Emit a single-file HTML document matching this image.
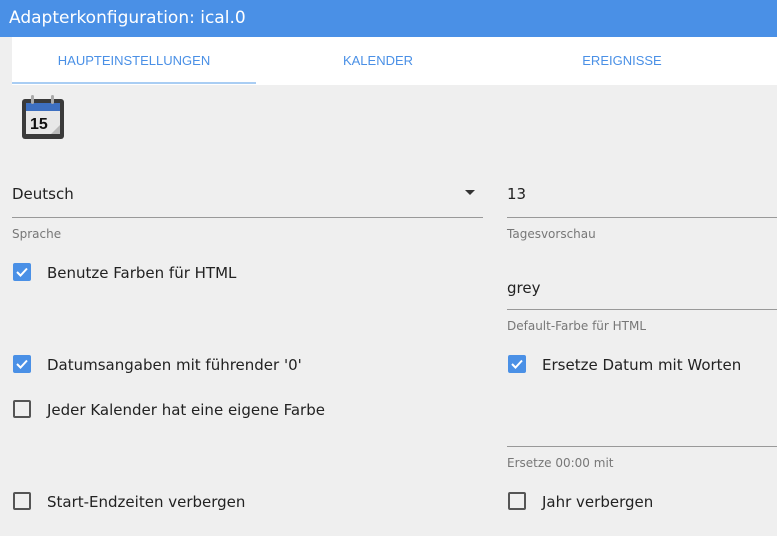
<!DOCTYPE html>
<html><head><style>
body{margin:0;width:777px;height:536px;background:#efefef;font-family:"DejaVu Sans",sans-serif;position:relative;overflow:hidden;color:#222}
.hdr{position:absolute;left:0;top:0;width:777px;height:37px;background:#4a90e6;color:#fff;font-size:17px;line-height:37px;padding-left:9px;box-sizing:border-box}
.tabs{position:absolute;left:12px;top:37px;width:765px;height:48px;background:#fff;font-family:"Liberation Sans",sans-serif}
.tab{position:absolute;top:0;height:48px;line-height:48px;font-size:13px;color:#4a90e6;text-align:center;width:244px}
.ul{position:absolute;left:0;top:45px;width:244px;height:2px;background:#a9cdf3}
.t{position:absolute;font-size:15px;color:#222}
.lbl{position:absolute;font-size:12px;color:#777}
.line{position:absolute;height:1px;background:#999}
.cb{position:absolute;width:18px;height:18px;border-radius:2px;box-sizing:border-box}
.on{background:#4a90e6}
.off{border:2px solid #555}
</style></head><body>
<div class="hdr">Adapterkonfiguration: ical.0</div>
<div class="tabs">
<div class="tab" style="left:0">HAUPTEINSTELLUNGEN</div>
<div class="tab" style="left:244px;width:244px">KALENDER</div>
<div class="tab" style="left:488px;width:244px">EREIGNISSE</div>
<div class="ul"></div>
</div>
<svg style="position:absolute;left:21px;top:94px" width="46" height="46" viewBox="0 0 46 46">
<rect x="1" y="5" width="42" height="40" rx="3" fill="#3a3a3a"/>
<rect x="5" y="9" width="34" height="8" fill="#3d6fc0"/>
<rect x="5" y="17" width="34" height="23" fill="#e8e8e8"/>
<path d="M30 40 L39 31 L39 40Z" fill="#bbb"/>
<text x="9" y="35" font-size="16" font-weight="bold" font-family="Liberation Sans" fill="#111">15</text>
<rect x="10" y="1" width="3" height="9" rx="1.5" fill="#aaa"/><rect x="30" y="1" width="3" height="9" rx="1.5" fill="#aaa"/>
</svg>
<div class="t" style="left:12px;top:185px">Deutsch</div>
<svg style="position:absolute;left:465px;top:190px" width="10" height="6"><path d="M0 0 L10 0 L5 5Z" fill="#333"/></svg>
<div class="line" style="left:12px;top:217px;width:471px"></div>
<div class="lbl" style="left:12px;top:227px">Sprache</div>
<div class="t" style="left:507px;top:185px">13</div>
<div class="line" style="left:507px;top:217px;width:270px"></div>
<div class="lbl" style="left:507px;top:227px">Tagesvorschau</div>
<div class="cb on" style="left:13px;top:263px"><svg width="18" height="18"><path d="M4 9 L7.5 12.5 L14 5.5" stroke="#fff" stroke-width="2" fill="none"/></svg></div>
<div class="t" style="left:47px;top:264px">Benutze Farben für HTML</div>
<div class="t" style="left:507px;top:279px">grey</div>
<div class="line" style="left:507px;top:309px;width:270px"></div>
<div class="lbl" style="left:507px;top:319px">Default-Farbe für HTML</div>
<div class="cb on" style="left:13px;top:355px"><svg width="18" height="18"><path d="M4 9 L7.5 12.5 L14 5.5" stroke="#fff" stroke-width="2" fill="none"/></svg></div>
<div class="t" style="left:47px;top:356px">Datumsangaben mit führender '0'</div>
<div class="cb on" style="left:508px;top:355px"><svg width="18" height="18"><path d="M4 9 L7.5 12.5 L14 5.5" stroke="#fff" stroke-width="2" fill="none"/></svg></div>
<div class="t" style="left:542px;top:356px">Ersetze Datum mit Worten</div>
<div class="cb off" style="left:13px;top:400px"></div>
<div class="t" style="left:47px;top:401px">Jeder Kalender hat eine eigene Farbe</div>
<div class="line" style="left:507px;top:446px;width:270px"></div>
<div class="lbl" style="left:507px;top:456px">Ersetze 00:00 mit</div>
<div class="cb off" style="left:13px;top:492px"></div>
<div class="t" style="left:47px;top:493px">Start-Endzeiten verbergen</div>
<div class="cb off" style="left:508px;top:492px"></div>
<div class="t" style="left:542px;top:493px">Jahr verbergen</div>
</body></html>
